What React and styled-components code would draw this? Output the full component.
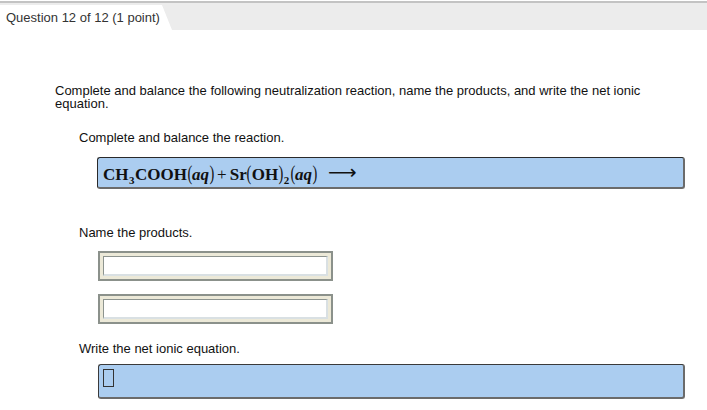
import React from 'react';
import styled, { createGlobalStyle } from 'styled-components';

const GlobalStyle = createGlobalStyle`
    html, body {
        margin: 0;
        padding: 0;
        background: #ffffff;
    }
    body {
        font-family: "Liberation Sans", Arial, sans-serif;
        color: #111;
    }
`;

export default function App() {
    return (
        <>
            <GlobalStyle />
            <Page>
                <Header>
                    <Tab>Question 12 of 12 (1 point)</Tab>
                </Header>
                <Content>
                    <Prompt>
                        Complete and balance the following neutralization reaction, name the products, and write the net ionic equation.
                    </Prompt>
                    <Part>
                        <Label>Complete and balance the reaction.</Label>
                        <EquationBox>
                            <Formula>
                                CH<Sub>3</Sub>COOH<Paren>(</Paren><Phase>aq</Phase><Paren>)</Paren>
                                <Plus>+</Plus>
                                Sr<Paren>(</Paren>OH<Paren>)</Paren><Sub>2</Sub><Paren>(</Paren><Phase>aq</Phase><Paren>)</Paren>
                                <Arrow>⟶</Arrow>
                            </Formula>
                        </EquationBox>

                        <Label $top={37}>Name the products.</Label>
                        <InputStack>
                            <TextField><FieldInner /></TextField>
                            <TextField><FieldInner /></TextField>
                        </InputStack>

                        <Label $top={18}>Write the net ionic equation.</Label>
                        <AnswerBox>
                            <Cursor />
                        </AnswerBox>
                    </Part>
                </Content>
            </Page>
        </>
    );
}

const Page = styled.div`
    width: 707px;
    height: 410px;
    overflow: hidden;
`;

const Header = styled.div`
    margin-top: 1px;
    height: 27px;
    border-top: 2px solid #c3c3c3;
    background: #ececec;
    display: flex;
    align-items: flex-end;
`;

const Tab = styled.div`
    width: 172px;
    height: 25px;
    box-sizing: border-box;
    padding: 6px 0 0 6px;
    background: #ffffff;
    clip-path: polygon(0 0, 162px 0, 100% 100%, 0 100%);
    font-size: 13px;
    line-height: 13px;
    color: #333;
    white-space: nowrap;
`;

const Content = styled.div`
    padding: 54px 52px 0 55px;
`;

const Prompt = styled.div`
    font-size: 13px;
    line-height: 13px;
    color: #111;
`;

const Part = styled.div`
    padding-left: 24px;
    margin-top: 21px;
`;

const Label = styled.div`
    font-size: 13px;
    line-height: 13px;
    margin-top: ${p => p.$top || 0}px;
`;

const EquationBox = styled.div`
    margin: 13px 0 0 18px;
    width: 588px;
    height: 32px;
    box-sizing: border-box;
    background: #abcdf0;
    border: 1px solid #2a2a2a;
    border-right: 2px solid #6b6b6b;
    border-bottom: 2px solid #6b6b6b;
    border-radius: 3px;
    display: flex;
    align-items: center;
    padding-left: 5px;
`;

const Formula = styled.div`
    font-family: "Liberation Serif", "Times New Roman", serif;
    font-weight: bold;
    font-size: 17px;
    color: #111;
    white-space: nowrap;
    display: flex;
    align-items: baseline;
`;

const Sub = styled.span`
    font-size: 11px;
    position: relative;
    top: 4px;
    margin: 0 0.5px;
`;

const Paren = styled.span`
    font-weight: normal;
    display: inline-block;
    transform: scale(0.85, 1.25);
    transform-origin: 50% 70%;
    margin: 0 -0.3px;
`;

const Phase = styled.span`
    font-style: italic;
`;

const Plus = styled.span`
    font-weight: normal;
    margin: 0 3px;
`;

const Arrow = styled.span`
    font-family: "DejaVu Sans", sans-serif;
    font-weight: normal;
    font-size: 20px;
    margin-left: 11px;
    position: relative;
    top: -1px;
`;

const InputStack = styled.div`
    margin: 12px 0 0 19px;
    display: flex;
    flex-direction: column;
    gap: 13px;
`;

const TextField = styled.div`
    width: 235px;
    height: 30px;
    box-sizing: border-box;
    border: 2px solid #8b918b;
    background: #ece9d8;
    padding: 3px;
`;

const FieldInner = styled.div`
    height: 100%;
    box-sizing: border-box;
    background: #ffffff;
    border: 1px solid #8d948f;
    border-bottom: 2px solid #d9e0e3;
    border-right: 2px solid #d9e0e3;
`;

const AnswerBox = styled.div`
    margin: 9px 0 0 19px;
    width: 587px;
    height: 35px;
    box-sizing: border-box;
    background: #abcdf0;
    border: 1px solid #3a3a3a;
    border-right: 2px solid #6b6b6b;
    border-bottom: 2px solid #6b6b6b;
    border-radius: 3px;
    padding: 4px 0 0 4px;
`;

const Cursor = styled.div`
    width: 11px;
    height: 18px;
    box-sizing: border-box;
    border: 1px solid #333;
`;
